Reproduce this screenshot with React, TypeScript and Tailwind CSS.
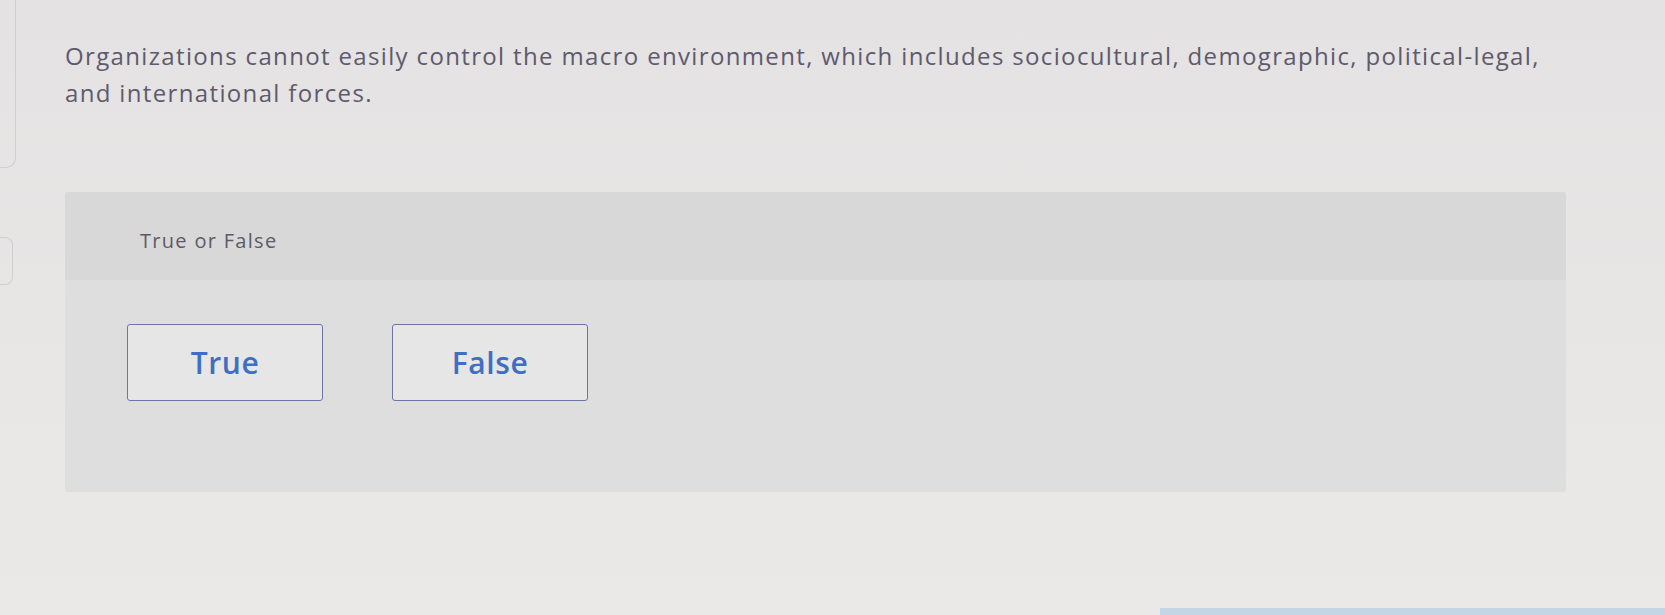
import { useState } from "react";

const QUESTION =
  "Organizations cannot easily control the macro environment, which includes sociocultural, demographic, political-legal, and international forces.";

const font = { fontFamily: '"Open Sans", "Liberation Sans", sans-serif' };

const AnswerButton = ({
  label,
  selected,
  onClick,
}: {
  label: string;
  selected: boolean;
  onClick: () => void;
}) => (
  <button
    onClick={onClick}
    className={`flex h-[77px] w-[196px] items-center justify-center rounded-[3px] border-[1.5px] border-[#6d74a6] text-[30px] font-semibold tracking-[0.6px] text-[#3f6fc1] ${
      selected ? "bg-[#dfe6f3]" : "bg-[#e7e6e6]"
    }`}
  >
    {label}
  </button>
);

const App = () => {
  const [answer, setAnswer] = useState<string | null>(null);

  return (
    <div
      className="flex h-[615px] w-[1665px] flex-col overflow-hidden bg-linear-to-b from-[#e4e2e2] to-[#ebe9e8]"
      style={font}
    >
      <div className="flex flex-1">
        {/* Sidebar edge */}
        <aside className="flex w-[16px] shrink-0 flex-col">
          <div className="h-[168px] rounded-br-[10px] border-r border-b border-[#d0cece]" />
          <div className="mt-[69px] h-[48px] w-[13px] rounded-r-[8px] border-y border-r border-[#d0cece]" />
        </aside>

        <main className="flex flex-1 flex-col pl-[49px] pr-[99px]">
          {/* Question */}
          <p className="max-w-[1495px] pt-[37px] text-[24px] leading-[37px] tracking-[1.35px] text-[#5e5a6d]">
            {QUESTION}
          </p>

          {/* Answer panel */}
          <div className="mt-[81px] overflow-hidden rounded-[3px] bg-[#dfdede]">
            <div className="flex h-[88px] items-center bg-[#d9d8d8] pt-[10px] pl-[75px] text-[20px] tracking-[1.3px] text-[#5c5a68]">
              True or False
            </div>
            <div className="flex gap-[69px] pt-[44px] pb-[91px] pl-[62px]">
              <AnswerButton
                label="True"
                selected={answer === "True"}
                onClick={() => setAnswer("True")}
              />
              <AnswerButton
                label="False"
                selected={answer === "False"}
                onClick={() => setAnswer("False")}
              />
            </div>
          </div>
        </main>
      </div>

      {/* Bottom bar edge */}
      <div className="h-[7px] w-[505px] self-end bg-[#c4d6e6]" />
    </div>
  );
};

export default App;
